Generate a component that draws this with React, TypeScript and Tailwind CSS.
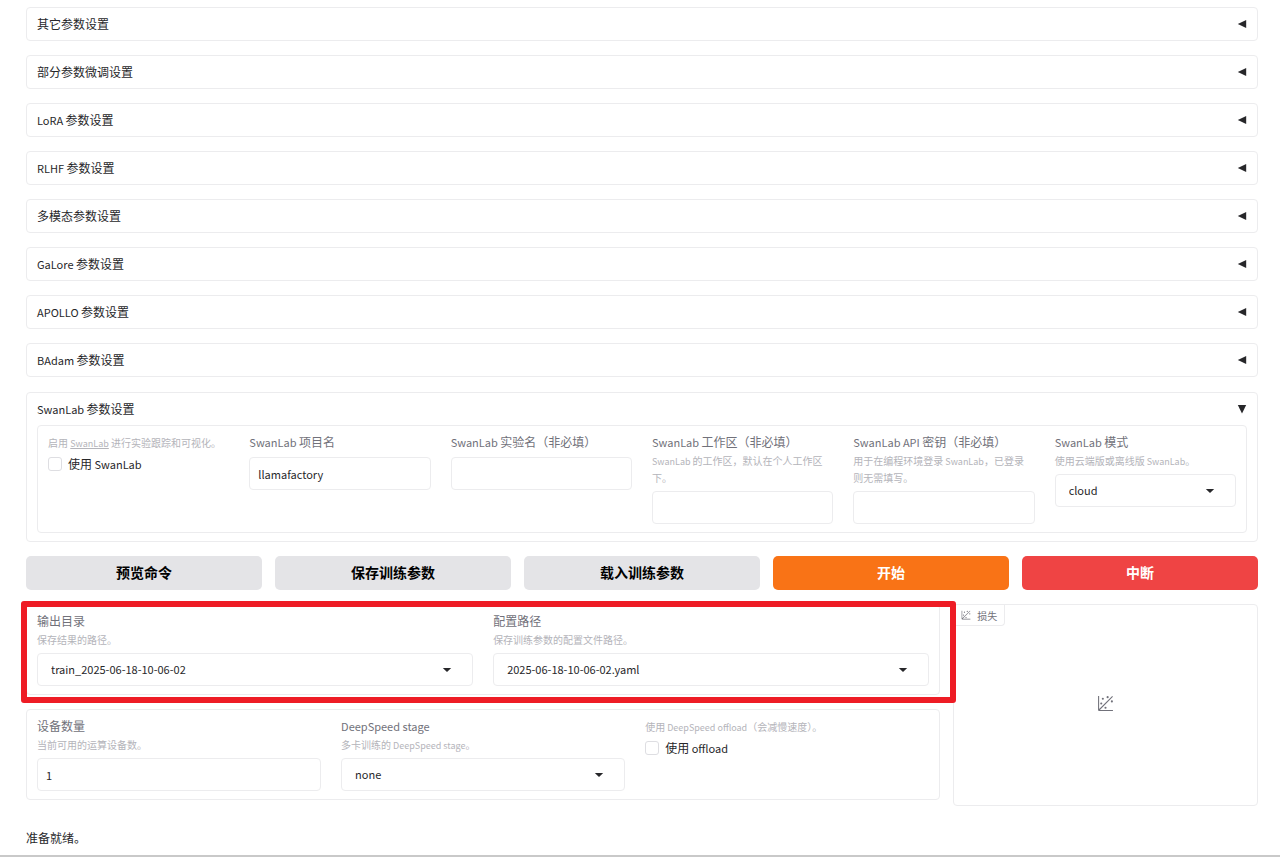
import { useId, useState } from "react"
import type { ReactNode } from "react"

const sections = [
  "其它参数设置",
  "部分参数微调设置",
  "LoRA 参数设置",
  "RLHF 参数设置",
  "多模态参数设置",
  "GaLore 参数设置",
  "APOLLO 参数设置",
  "BAdam 参数设置",
]

const actions = [
  { text: "预览命令", style: "bg-[#e4e4e7] text-black" },
  { text: "保存训练参数", style: "bg-[#e4e4e7] text-black" },
  { text: "载入训练参数", style: "bg-[#e4e4e7] text-black" },
  { text: "开始", style: "bg-[#f97316] text-white" },
  { text: "中断", style: "bg-[#ef4444] text-white" },
]

// Latin letters are set one pixel smaller than the Chinese around them
function Mixed({ text, small = false }: { text: string; small?: boolean }) {
  return (
    <>
      {text.split(/([\x20-\x7e]+)/).map((part, i) =>
        i % 2 ? <span key={i} className={small ? "text-[9px] leading-none" : "text-[11px] leading-none"}>{part}</span> : part
      )}
    </>
  )
}

function Marker({ open }: { open: boolean }) {
  return (
    <svg viewBox="0 0 10 10" className="size-[10px] fill-[#27272a]" aria-hidden="true">
      <path d={open ? "M.8 1h8.4L5 9.4z" : "M9.2 1v8L.8 5z"} />
    </svg>
  )
}

function Accordion({ title, children }: { title: string; children?: ReactNode }) {
  const [open, setOpen] = useState(Boolean(children))

  return (
    <section className="border border-[#ececee] rounded">
      <button
        onClick={() => setOpen(!open)}
        aria-expanded={open}
        className="w-full h-8 px-[10px] flex items-center justify-between text-left"
      >
        <span><Mixed text={title} /></span>
        <Marker open={open} />
      </button>
      {open && children}
    </section>
  )
}

function Info({ children }: { children: ReactNode }) {
  return <p className="pr-2 text-[10px] leading-[17px] text-[#b4b4ba]">{children}</p>
}

function Field({ label, info, value, options }: { label: string; info?: string; value?: string; options?: string[] }) {
  const id = useId()

  return (
    <div className="flex-1 min-w-0">
      <label htmlFor={id} className="block leading-4 mb-[2px] text-[#71717a]"><Mixed text={label} /></label>
      {info && <Info><Mixed text={info} small /></Info>}
      {options ? (
        <div className="relative mt-[5px]">
          <select id={id} className="appearance-none w-full h-[33px] pl-[13px] pr-10 text-[11px] border border-[#ececee] rounded bg-white">
            {options.map((o) => <option key={o}>{o}</option>)}
          </select>
          <svg viewBox="0 0 18 18" className="absolute right-[17px] top-2 size-[18px] fill-[#27272a] pointer-events-none" aria-hidden="true">
            <path d="M4.8 7h8.4L9 11z" />
          </svg>
        </div>
      ) : (
        <input
          id={id}
          type="text"
          defaultValue={value}
          className={`block w-full h-[33px] px-2 text-[11px] border border-[#ececee] rounded bg-white ${info ? "mt-[5px]" : "mt-[7px]"}`}
        />
      )}
    </div>
  )
}

function Check({ label, children }: { label: string; children: ReactNode }) {
  return (
    <div className="flex-1 min-w-0">
      <Info>{children}</Info>
      <label className="mt-[5px] flex items-center gap-[6px] leading-4">
        <input type="checkbox" className="appearance-none size-[14px] border border-[#dedee2] rounded-[3px] bg-white checked:bg-[#f97316]" />
        <span><Mixed text={label} /></span>
      </label>
    </div>
  )
}

function Panel({ children }: { children: ReactNode }) {
  return <div className="flex gap-5 border border-[#ececee] rounded px-[10px] py-2">{children}</div>
}

function PlotIcon({ className }: { className: string }) {
  return (
    <svg viewBox="0 0 32 32" className={className} fill="currentColor" aria-hidden="true">
      <circle cx="20" cy="4" r="2" />
      <circle cx="8" cy="16" r="2" />
      <circle cx="28" cy="12" r="2" />
      <circle cx="11" cy="7" r="2" />
      <circle cx="16" cy="24" r="2" />
      <path d="M30 3.413L28.586 2L4 26.585V2H2v26a2 2 0 0 0 2 2h26v-2H5.413Z" />
    </svg>
  )
}

export default function App() {
  return (
    <div className="bg-white text-[12px] text-[#27272a] font-['Noto_Sans_CJK_SC',sans-serif]">
      <main className="pl-[26px] pr-[22px] pt-[7px] pb-[9px]">

        <div className="flex flex-col gap-[14px]">
          {sections.map((s) => <Accordion key={s} title={s} />)}
        </div>

        <div className="mt-[15px]">
          <Accordion title="SwanLab 参数设置">
            <div className="px-[10px] pb-2">
              <Panel>
                <Check label="使用 SwanLab">
                  启用 <a href="https://swanlab.cn/" className="underline text-[9px] leading-none">SwanLab</a> 进行实验跟踪和可视化。
                </Check>
                <Field label="SwanLab 项目名" value="llamafactory" />
                <Field label="SwanLab 实验名（非必填）" />
                <Field label="SwanLab 工作区（非必填）" info="SwanLab 的工作区，默认在个人工作区下。" />
                <Field label="SwanLab API 密钥（非必填）" info="用于在编程环境登录 SwanLab，已登录则无需填写。" />
                <Field label="SwanLab 模式" info="使用云端版或离线版 SwanLab。" options={["cloud", "local"]} />
              </Panel>
            </div>
          </Accordion>
        </div>

        <div className="mt-[14px] grid grid-cols-5 gap-[13px]">
          {actions.map((a) => (
            <button key={a.text} className={`h-[34px] pb-px rounded-[5px] text-[14px] font-bold ${a.style}`}>{a.text}</button>
          ))}
        </div>

        <div className="mt-[14px] grid grid-cols-[3fr_1fr] items-start gap-[13px]">
          <div className="min-w-0 flex flex-col gap-[14px]">
            <div className="relative">
              <Panel>
                <Field label="输出目录" info="保存结果的路径。" options={["train_2025-06-18-10-06-02"]} />
                <Field label="配置路径" info="保存训练参数的配置文件路径。" options={["2025-06-18-10-06-02.yaml"]} />
              </Panel>
              <div className="absolute -left-[5px] -right-4 -top-[3px] -bottom-2 z-10 border-6 border-[#ee1c25] rounded-[3px] pointer-events-none"></div>
            </div>
            <Panel>
              <Field label="设备数量" info="当前可用的运算设备数。" value="1" />
              <Field label="DeepSpeed stage" info="多卡训练的 DeepSpeed stage。" options={["none", "2", "3"]} />
              <Check label="使用 offload"><Mixed text="使用 DeepSpeed offload（会减慢速度）。" small /></Check>
            </Panel>
          </div>

          <div className="h-[202px] flex flex-col border border-[#ececee] rounded text-[#71717a]">
            <div className="self-start h-[21px] px-[7px] flex items-center gap-[6px] border-r border-b border-[#ececee] rounded-br text-[10px]">
              <PlotIcon className="size-[10px]" />
              损失
            </div>
            <div className="flex-1 flex items-center justify-center pb-6">
              <PlotIcon className="size-[17px]" />
            </div>
          </div>
        </div>

        <p className="mt-6 leading-4">准备就绪。</p>
      </main>
      <hr className="border-t-2 border-[#c9c9c9]" />
    </div>
  )
}
